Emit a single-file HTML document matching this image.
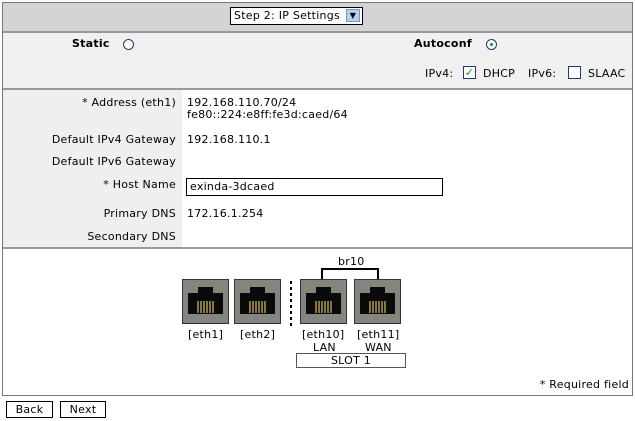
<!DOCTYPE html>
<html><head><style>
body{margin:0;width:635px;height:421px;background:#fff;font-family:"DejaVu Sans",Verdana,sans-serif;font-size:11px;letter-spacing:0.25px;color:#000;position:relative;overflow:hidden}
.a{position:absolute;white-space:nowrap}
.port{position:absolute;width:45px;height:43px;background:#858580;border:1px solid #333;top:279px}
.port svg{position:absolute;left:0;top:0}
.r{text-align:right}
</style></head><body>
<div class="a" style="left:2px;top:2px;width:629px;height:392px;border:1px solid #777"></div>
<div class="a" style="left:3px;top:3px;width:629px;height:28px;background:#d4d4d4"></div>
<div class="a" style="left:3px;top:31px;width:629px;height:2px;background:#999"></div>
<div class="a" style="left:3px;top:33px;width:629px;height:55px;background:#f0f0f0"></div>
<div class="a" style="left:3px;top:88px;width:629px;height:2px;background:#999"></div>
<div class="a" style="left:3px;top:90px;width:179px;height:157px;background:#efefef"></div>
<div class="a" style="left:3px;top:247px;width:629px;height:2px;background:#999"></div>

<div class="a" style="left:230px;top:7px;width:131px;height:16px;border:1px solid #000;background:#fff"></div>
<div class="a" style="left:234px;top:9px">Step 2: IP Settings</div>
<div class="a" style="left:346px;top:9px;width:14px;height:13px;background:#b8cdf0;border:1px solid #7a97c8;box-sizing:border-box;font-size:8px;line-height:11px;text-align:center;color:#000">&#9660;</div>

<div class="a" style="left:72px;top:37px;font-weight:bold">Static</div>
<div class="a" style="left:123px;top:39px;width:11px;height:11px;border:1px solid #1c3a6a;border-radius:50%;box-sizing:border-box;background:#fff"></div>
<div class="a" style="left:414px;top:37px;font-weight:bold">Autoconf</div>
<div class="a" style="left:486px;top:39px;width:11px;height:11px;border:1px solid #1c3a6a;border-radius:50%;box-sizing:border-box;background:#fff"><div style="position:absolute;left:3px;top:3px;width:3px;height:3px;border-radius:50%;background:#2a8a2a"></div></div>
<div class="a" style="left:425px;top:67px">IPv4:</div>
<div class="a" style="left:463px;top:66px;width:13px;height:13px;border:1px solid #1c3a6a;box-sizing:border-box;background:#fff;color:#1a8a1a;font-size:11px;line-height:11px;text-align:center;font-weight:bold">&#10003;</div>
<div class="a" style="left:483px;top:67px">DHCP</div>
<div class="a" style="left:528px;top:67px">IPv6:</div>
<div class="a" style="left:568px;top:66px;width:13px;height:13px;border:1px solid #1c3a6a;box-sizing:border-box;background:#fff"></div>
<div class="a" style="left:588px;top:67px">SLAAC</div>

<div class="a r" style="right:459px;top:96px">* Address (eth1)</div>
<div class="a" style="left:187px;top:96px">192.168.110.70/24</div>
<div class="a" style="left:187px;top:108px">fe80::224:e8ff:fe3d:caed/64</div>
<div class="a r" style="right:459px;top:133px">Default IPv4 Gateway</div>
<div class="a" style="left:187px;top:133px">192.168.110.1</div>
<div class="a r" style="right:459px;top:155px">Default IPv6 Gateway</div>
<div class="a r" style="right:459px;top:178px">* Host Name</div>
<div class="a" style="left:186px;top:178px;width:255px;height:16px;border:1px solid #000;background:#fff"></div>
<div class="a" style="left:190px;top:180px">exinda-3dcaed</div>
<div class="a r" style="right:459px;top:207px">Primary DNS</div>
<div class="a" style="left:187px;top:207px">172.16.1.254</div>
<div class="a r" style="right:459px;top:230px">Secondary DNS</div>

<div class="a" style="left:338px;top:255px">br10</div>
<div class="a" style="left:321px;top:268px;width:54px;height:9px;border:2px solid #000;border-bottom:none"></div>
<div class="a" style="left:290px;top:281px;width:2px;height:45px;background:repeating-linear-gradient(#000 0 3px,transparent 3px 6px)"></div>

<div class="port" style="left:182px"><svg width="45" height="43"><path d="M5 13h10v-6h15v6h10v21H5z" fill="#0a0a0a"/><g stroke="#d8c060" stroke-width="1.2"><path d="M15 21v12M18 21v12M21 21v12M24 21v12M27 21v12M30 21v12"/></g></svg></div>
<div class="port" style="left:234px"><svg width="45" height="43"><path d="M5 13h10v-6h15v6h10v21H5z" fill="#0a0a0a"/><g stroke="#d8c060" stroke-width="1.2"><path d="M15 21v12M18 21v12M21 21v12M24 21v12M27 21v12M30 21v12"/></g></svg></div>
<div class="port" style="left:300px"><svg width="45" height="43"><path d="M5 13h10v-6h15v6h10v21H5z" fill="#0a0a0a"/><g stroke="#d8c060" stroke-width="1.2"><path d="M15 21v12M18 21v12M21 21v12M24 21v12M27 21v12M30 21v12"/></g></svg></div>
<div class="port" style="left:354px"><svg width="45" height="43"><path d="M5 13h10v-6h15v6h10v21H5z" fill="#0a0a0a"/><g stroke="#d8c060" stroke-width="1.2"><path d="M15 21v12M18 21v12M21 21v12M24 21v12M27 21v12M30 21v12"/></g></svg></div>
<div class="a" style="left:188px;top:328px">[eth1]</div>
<div class="a" style="left:240px;top:328px">[eth2]</div>
<div class="a" style="left:302px;top:328px">[eth10]</div>
<div class="a" style="left:357px;top:328px">[eth11]</div>
<div class="a" style="left:313px;top:341px">LAN</div>
<div class="a" style="left:365px;top:341px">WAN</div>
<div class="a" style="left:296px;top:353px;width:108px;height:13px;border:1px solid #555;text-align:center;line-height:13px">SLOT 1</div>
<div class="a" style="right:6px;top:378px">* Required field</div>

<div class="a" style="left:6px;top:401px;width:45px;height:15px;border:1px solid #000;text-align:center;line-height:15px">Back</div>
<div class="a" style="left:60px;top:401px;width:44px;height:15px;border:1px solid #000;text-align:center;line-height:15px">Next</div>
</body></html>
